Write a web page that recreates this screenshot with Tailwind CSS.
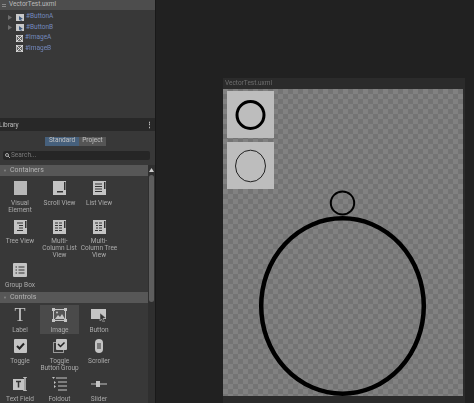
<!DOCTYPE html>
<html lang="en">
<head>
<meta charset="UTF-8">
<title>VectorTest.uxml</title>
<script src="https://cdn.jsdelivr.net/npm/@tailwindcss/browser@4"></script>
</head>
<body class="h-[403px] w-[474px] overflow-hidden bg-[#212121] font-['Roboto',sans-serif] text-[6.5px] text-[#ababab]">
<div class="flex h-[403px] blur-[0.35px]">

<!-- left column -->
<div class="flex h-full w-[155px] flex-col bg-[#383838]">
  <div class="flex h-[10px] items-center bg-[#4d4d4d] text-[#bcbcbc]"><span class="ml-[2px] mr-[3px] h-[3px] w-[4px] border-y border-[#888]"></span>VectorTest.uxml</div>
  <div class="h-[108px] pt-[2px] text-[#7388bd]">
    <div class="flex h-[10.5px] items-center pl-[8px]"><svg class="mr-[4px]" width="4" height="5"><path d="M0 0l4 2.500-4 2.500z" fill="#6e6e6e"/></svg><svg class="mr-[2px]" width="8" height="7"><rect width="8" height="7" fill="#c8c8c8"/><path d="M3 2l4 3-2 .3 .8 1.700-1 0-.8-1.500-1 1z" fill="#3d5a80"/></svg>#ButtonA</div>
    <div class="flex h-[10.5px] items-center pl-[8px]"><svg class="mr-[4px]" width="4" height="5"><path d="M0 0l4 2.500-4 2.500z" fill="#6e6e6e"/></svg><svg class="mr-[2px]" width="8" height="7"><rect width="8" height="7" fill="#c8c8c8"/><path d="M3 2l4 3-2 .3 .8 1.700-1 0-.8-1.500-1 1z" fill="#3d5a80"/></svg>#ButtonB</div>
    <div class="flex h-[10.5px] items-center pl-[16px]"><svg class="mr-[2px]" width="7" height="7"><rect x=".5" y=".5" width="6" height="6" fill="#666" stroke="#bbb"/><path d="M0 0l7 7M7 0l-7 7" stroke="#ddd"/></svg>#ImageA</div>
    <div class="flex h-[10.5px] items-center pl-[16px]"><svg class="mr-[2px]" width="7" height="7"><rect x=".5" y=".5" width="6" height="6" fill="#666" stroke="#bbb"/><path d="M0 0l7 7M7 0l-7 7" stroke="#ddd"/></svg>#ImageB</div>
  </div>
  <div class="flex h-[13px] items-center justify-between bg-[#282828] pt-[2px] pr-[2px] text-[#bcbcbc]"><span class="-ml-[1px]">Library</span><span class="font-bold">⋮</span></div>

  <div class="flex h-[20px] items-center pl-[45px]">
    <span class="flex h-[9px] w-[34px] items-center justify-center bg-[#46607c] text-[#c0c0c0]">Standard</span>
    <span class="flex h-[9px] w-[27px] items-center justify-center bg-[#555] text-[#c0c0c0]">Project</span>
  </div>
  <div class="ml-[3px] flex h-[9px] w-[147px] items-center rounded-[2px] bg-[#262626] pl-[2px] text-[#7c7c7c]">
    <svg class="mr-[1px]" width="5" height="5"><circle cx="2" cy="2" r="1.500" fill="none" stroke="#aaa"/><path d="M3 3l2 2" stroke="#aaa"/></svg>Search...
  </div>

  <div class="relative mt-[5px] flex-1 overflow-hidden">
    <div class="w-[148px]">
      <div class="flex h-[11px] items-center bg-[#575757] pl-[3px] text-[7px] font-normal text-[#b4b4b4]"><span class="mr-[3px] text-[4px] text-[#888]">▼</span>Containers</div>
      <div class="grid grid-cols-[40px_39px_40px] pt-[3px] text-center leading-[7px]">
        <div class="flex h-[39px] flex-col items-center pt-[2px]"><div class="mb-[4.5px] h-[14px] w-[13px] bg-[#b8b8b8]"></div>Visual<br>Element</div>
        <div class="flex h-[39px] flex-col items-center pt-[2px]"><svg class="mb-[4.5px]" width="13" height="14"><rect width="13" height="14" fill="#c4c4c4"/><rect x="4" y="10" width="6" height="1.500" fill="#333"/><rect x="11" y="1" width="1.500" height="8" fill="#333"/></svg>Scroll View</div>
        <div class="flex h-[39px] flex-col items-center pt-[2px]"><svg class="mb-[4.5px]" width="13" height="14"><rect width="13" height="14" fill="#c4c4c4"/><path d="M2 3h7M2 5.500h7M2 8h7M2 10.500h7" stroke="#333"/><rect x="11" y="1" width="1.500" height="7" fill="#333"/></svg>List View</div>
        <div class="flex h-[43px] flex-col items-center pt-[2px]"><svg class="mb-[3.5px]" width="13" height="14"><rect width="13" height="14" fill="#c4c4c4"/><path d="M3 3h6M5 5.500h4M5 8h4M3 10.500h6" stroke="#333"/><rect x="11" y="1" width="1.500" height="7" fill="#333"/></svg>Tree View</div>
        <div class="flex h-[43px] flex-col items-center pt-[2px]"><svg class="mb-[3.5px]" width="13" height="14"><rect width="13" height="14" fill="#c4c4c4"/><path d="M2 3h3M6 3h3M2 5.500h3M6 5.500h3M2 8h3M6 8h3M2 10.500h3M6 10.500h3" stroke="#333"/><rect x="11" y="1" width="1.500" height="7" fill="#333"/></svg>Multi-<br>Column List<br>View</div>
        <div class="flex h-[43px] flex-col items-center pt-[2px]"><svg class="mb-[3.5px]" width="13" height="14"><rect width="13" height="14" fill="#c4c4c4"/><path d="M2 3h3M6 3h3M3 5.500h2M6 5.500h3M3 8h2M6 8h3M2 10.500h3M6 10.500h3" stroke="#333"/><rect x="11" y="1" width="1.500" height="7" fill="#333"/></svg>Multi-<br>Column Tree<br>View</div>
        <div class="flex h-[31px] flex-col items-center pt-[2px]"><svg class="mb-[4.5px]" width="14" height="14"><rect width="14" height="14" rx="1" fill="#c4c4c4"/><path d="M5.500 4h6M5.500 7h6M5.500 10h6M2.500 4h1.500M2.500 7h1.500M2.500 10h1.500" stroke="#333"/></svg>Group Box</div>
      </div>
      <div class="flex h-[11px] items-center bg-[#575757] pl-[3px] text-[7px] font-normal text-[#b4b4b4]"><span class="mr-[3px] text-[4px] text-[#888]">▼</span>Controls</div>
      <div class="grid grid-cols-[40px_39px_40px] pt-[2px] text-center leading-[7px]">
        <div class="flex h-[29px] flex-col items-center pt-[3px]"><span class="mb-[4.5px] h-[14px] font-['Liberation_Serif',serif] text-[18px] leading-[14px] text-[#c4c4c4]">T</span>Label</div>
        <div class="flex h-[29px] flex-col items-center bg-[#4a4a4a] pt-[3px]"><svg class="mb-[4.5px]" width="15" height="14"><rect x="1.500" y="1.500" width="12" height="11" fill="#555" stroke="#c4c4c4"/><path d="M3 11l3-4 2 2 2-3 3 5z" fill="#c4c4c4"/><circle cx="5" cy="4.500" r="1" fill="#c4c4c4"/><path d="M0 0h3v3h-3zM12 0h3v3h-3zM0 11h3v3h-3zM12 11h3v3h-3z" fill="#c4c4c4"/></svg>Image</div>
        <div class="flex h-[29px] flex-col items-center pt-[3px]"><svg class="mb-[4.5px]" width="16" height="14"><rect y="1" width="15" height="10" fill="#c4c4c4"/><path d="M9 5l6 5-3 .5 1.500 3-1.500 .5-1.500-3-1.500 2z" fill="#333" stroke="#c4c4c4" stroke-width=".5"/></svg>Button</div>
        <div class="mt-[2px] flex h-[38px] flex-col items-center pt-[3px]"><svg class="mb-[4.5px]" width="13" height="14"><rect width="13" height="14" rx="1" fill="#c4c4c4"/><path d="M3 7l2.500 2.500 4.500-5" stroke="#222" stroke-width="2" fill="none"/></svg>Toggle</div>
        <div class="mt-[2px] flex h-[38px] flex-col items-center pt-[3px]"><svg class="mb-[4.5px]" width="14" height="14"><rect x=".5" y="3.500" width="10" height="10" fill="none" stroke="#999"/><rect x="3" width="11" height="11" rx="1" fill="#c4c4c4"/><path d="M5 5l2.500 2.500 4-4" stroke="#222" stroke-width="1.500" fill="none"/></svg>Toggle<br>Button Group</div>
        <div class="mt-[2px] flex h-[38px] flex-col items-center pt-[3px]"><svg class="mb-[4.5px]" width="10" height="14"><rect x="1" width="8" height="14" rx="4" fill="#c4c4c4"/><path d="M3 5h4M3 7h4M3 9h4" stroke="#333"/></svg>Scroller</div>
        <div class="flex h-[30px] flex-col items-center pt-[3px]"><svg class="mb-[4.5px]" width="15" height="14"><rect y="2" width="11" height="11" fill="#c4c4c4"/><path d="M3 4.500h5M5.500 4.500v6" stroke="#333" stroke-width="1.500"/><path d="M10 0h4M12 0v14M10 14h4" stroke="#c4c4c4" stroke-width="1.500"/></svg>Text Field</div>
        <div class="flex h-[30px] flex-col items-center pt-[3px]"><svg class="mb-[4.5px]" width="15" height="14"><path d="M4 1h11M6 5h9M6 9h9M6 13h9" stroke="#c4c4c4"/><path d="M0 0h3l-1.500 2zM2 4l2 1.500-2 1.500zM2 8l2 1.500-2 1.500z" fill="#c4c4c4"/></svg>Foldout</div>
        <div class="flex h-[30px] flex-col items-center pt-[3px]"><svg class="mb-[4.5px]" width="16" height="14"><path d="M0 7h16" stroke="#c4c4c4"/><rect x="5" y="4" width="4" height="6" fill="#c4c4c4"/></svg>Slider</div>
      </div>
    </div>
    <div class="absolute top-0 right-0 h-full w-[7px] bg-[#2f2f2f]">
      <svg class="mx-auto mt-[3px]" width="5" height="4"><path d="M2.500 0l2.500 4h-5z" fill="#ccc"/></svg>
      <div class="mx-auto mt-[3px] h-[127px] w-[5px] rounded-[3px] bg-[#5e5e5e]"></div>
    </div>
  </div>
</div>

<!-- viewport -->
<div class="flex-1 border-l border-[#191919] pt-[78px] pl-[67px]">
  <div class="w-[242px] bg-[#2b2b2b] pb-[7px]">
    <div class="flex h-[11px] items-center pl-[2px] text-[#6f6f6f]">VectorTest.uxml</div>
    <div class="relative h-[307px] w-[240px] bg-[repeating-conic-gradient(#747474_0_25%,#818181_0_50%)] bg-[length:10px_10px] pt-[2px] pl-[4px]">
      <div class="flex h-[47px] w-[47px] items-center justify-center bg-[#bdbdbd]">
        <svg width="32" height="32"><circle cx="15.500" cy="16" r="13.500" fill="none" stroke="#000" stroke-width="3"/></svg>
      </div>
      <div class="mt-[4px] flex h-[47px] w-[47px] items-center justify-center bg-[#bdbdbd]">
        <svg width="34" height="34"><ellipse cx="16.500" cy="17" rx="15" ry="15.800" fill="none" stroke="#222" stroke-width="1"/></svg>
      </div>
      <svg class="absolute top-[100px] left-[32px]" width="176" height="207">
        <ellipse cx="87.500" cy="14" rx="11.700" ry="11.500" fill="none" stroke="#000" stroke-width="2"/>
        <ellipse cx="87.500" cy="117" rx="81.300" ry="87.700" fill="none" stroke="#000" stroke-width="4.500"/>
      </svg>
    </div>
  </div>
</div>
</div>
</body>
</html>
